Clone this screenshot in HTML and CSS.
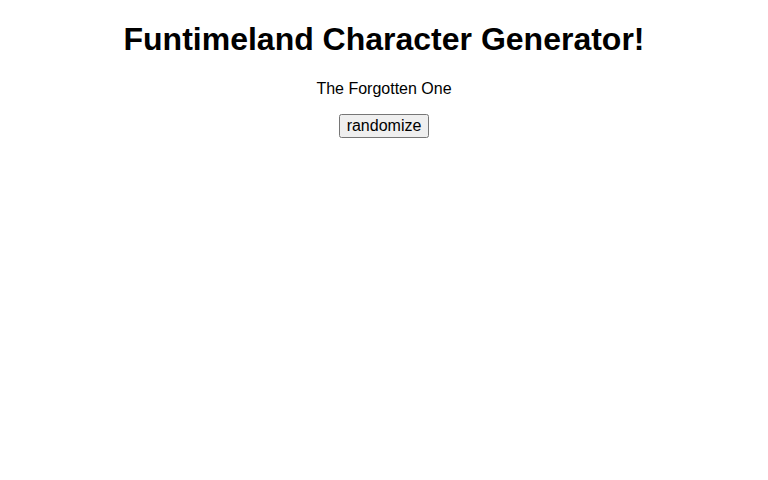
FILE: index.html
```html
<!DOCTYPE html>
<html lang="en">
<head>
  <meta charset="UTF-8">
  <title>Funtimeland Character Generator</title>
  <link rel="stylesheet" href="styles.css">
</head>
<body>
  <div class="container">
    <h1>Funtimeland Character Generator!</h1>
    <p id="character-name">The Forgotten One</p>
    <button onclick="randomize()">randomize</button>
  </div>

  <script>
    const titles = ["The Forgotten One", "The Brave Toad", "The Silly Wizard", "The Lost Prince", "The Sleepy Giant"];

    function randomize() {
      const pick = titles[Math.floor(Math.random() * titles.length)];
      document.getElementById("character-name").textContent = pick;
    }
  </script>
</body>
</html>
```

FILE: styles.css
```css
body {
  font-family: "Liberation Sans", Arial, sans-serif;
  margin: 0;
}
.container {
  text-align: center;
}
button {
  font-family: "Liberation Sans", Arial, sans-serif;
  font-size: 16px;
}
```
